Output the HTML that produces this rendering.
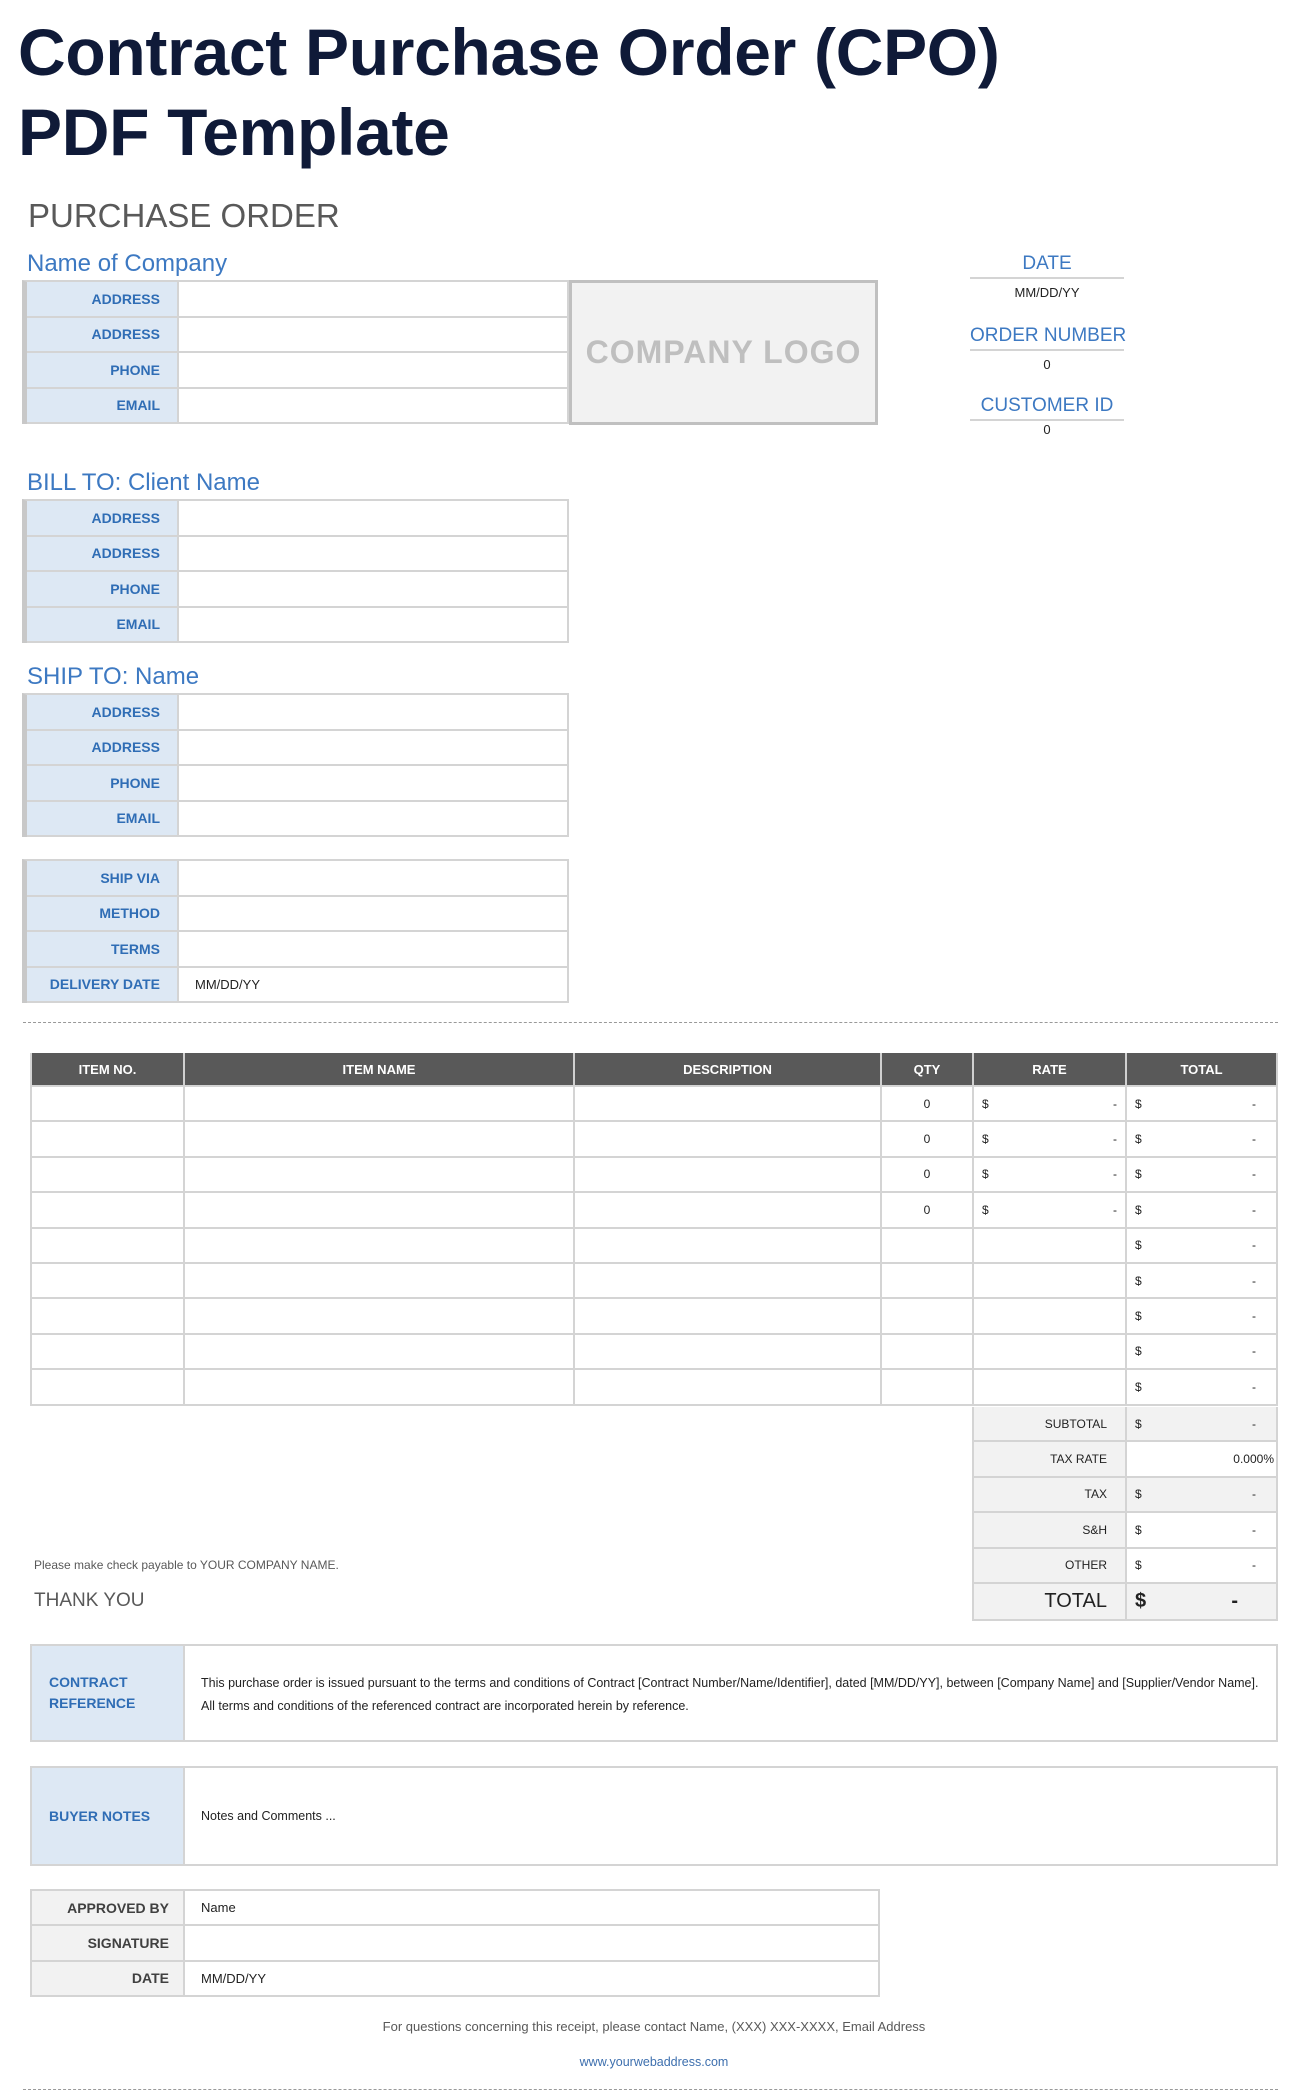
<!DOCTYPE html>
<html><head><meta charset="utf-8"><style>
*{margin:0;padding:0;box-sizing:border-box}
body{width:1300px;height:2099px;background:#fff;font-family:"Liberation Sans",sans-serif;position:relative;overflow:hidden}
.a{position:absolute}
h1{position:absolute;left:18px;font-size:66px;font-weight:bold;color:#0f1a38;letter-spacing:-0.3px;line-height:80px;white-space:nowrap}
.kv{position:absolute;left:22px;width:547px;border:2px solid #d4d4d4;border-left:5px solid #c8c8c8;border-bottom:none}
.kv .r{display:flex;height:35.5px;border-bottom:2px solid #d4d4d4}
.kv .l{width:152px;flex:none;background:#dde8f4;color:#2f6db5;font-weight:bold;font-size:14px;text-align:right;padding-right:17px;border-right:2px solid #d4d4d4;display:flex;align-items:center;justify-content:flex-end}
.kv .v{font-size:13px;padding-left:16px;color:#222;display:flex;align-items:center}
.blue{color:#3d79c2}
.grid{position:absolute;border-left:2px solid #d4d4d4}
.grid .r{display:flex;height:35.4px;border-bottom:2px solid #d4d4d4}
.grid .c{flex:none;border-right:2px solid #d4d4d4;font-size:12px;color:#222;padding:0 8px;display:flex;align-items:center}
.hd .c{background:#595959;color:#fff;font-weight:bold;font-size:13px;justify-content:center;border-right:2px solid #d0d0d0}
.g{background:#f2f2f2}
.sp{justify-content:space-between}
.sp span:last-child{margin-right:12px}
.box{position:absolute;left:30px;width:1248px;border:2px solid #d4d4d4;display:flex}
.box .lb{width:153px;flex:none;background:#dde8f4;color:#2f6db5;font-weight:bold;font-size:14px;padding-left:17px;display:flex;align-items:center;border-right:2px solid #d4d4d4;line-height:21px}
.box .tx{font-size:12.5px;color:#222;padding:26px 16px 0 16px;line-height:23px}
.dash{position:absolute;left:23px;width:1255px;border-top:1px dashed #999}
.rc{position:absolute;left:960px;width:174px;text-align:center}
.rc .h{font-size:19px;color:#3d79c2;border-bottom:2px solid #d4d4d4;padding-bottom:2px;white-space:nowrap;margin:0 10px}
.rc .v{font-size:13px;color:#222;margin-top:6px}
</style></head><body>
<h1 style="top:12px">Contract Purchase Order (CPO)</h1>
<h1 style="top:92px">PDF Template</h1>
<div class="a" style="left:28px;top:197px;font-size:33px;color:#595959">PURCHASE ORDER</div>
<div class="a blue" style="left:27px;top:250px;font-size:24px">Name of Company</div>
<div class="kv" style="top:280px"><div class="r"><div class="l">ADDRESS</div><div class="v"></div></div><div class="r"><div class="l">ADDRESS</div><div class="v"></div></div><div class="r"><div class="l">PHONE</div><div class="v"></div></div><div class="r"><div class="l">EMAIL</div><div class="v"></div></div></div>
<div class="a" style="left:569px;top:280px;width:309px;height:145px;background:#f2f2f2;border:3px solid #c0c0c0;display:flex;align-items:center;justify-content:center;font-size:32px;font-weight:bold;color:#bfbfbf;letter-spacing:1px">COMPANY LOGO</div>
<div class="rc" style="top:253px"><div class="h">DATE</div><div class="v">MM/DD/YY</div></div>
<div class="rc" style="top:325px"><div class="h">ORDER NUMBER</div><div class="v">0</div></div>
<div class="rc" style="top:395px"><div class="h">CUSTOMER ID</div><div class="v" style="margin-top:1px">0</div></div>
<div class="a blue" style="left:27px;top:469px;font-size:24px">BILL TO: Client Name</div>
<div class="kv" style="top:499px"><div class="r"><div class="l">ADDRESS</div><div class="v"></div></div><div class="r"><div class="l">ADDRESS</div><div class="v"></div></div><div class="r"><div class="l">PHONE</div><div class="v"></div></div><div class="r"><div class="l">EMAIL</div><div class="v"></div></div></div>
<div class="a blue" style="left:27px;top:663px;font-size:24px">SHIP TO: Name</div>
<div class="kv" style="top:693px"><div class="r"><div class="l">ADDRESS</div><div class="v"></div></div><div class="r"><div class="l">ADDRESS</div><div class="v"></div></div><div class="r"><div class="l">PHONE</div><div class="v"></div></div><div class="r"><div class="l">EMAIL</div><div class="v"></div></div></div>
<div class="kv" style="top:859px"><div class="r"><div class="l">SHIP VIA</div><div class="v"></div></div><div class="r"><div class="l">METHOD</div><div class="v"></div></div><div class="r"><div class="l">TERMS</div><div class="v"></div></div><div class="r"><div class="l">DELIVERY DATE</div><div class="v">MM/DD/YY</div></div></div>
<div class="dash" style="top:1022px"></div>

<div class="grid" style="left:30px;top:1053px;width:1248px">
<div class="r hd" style="height:34px"><div class="c" style="width:153px">ITEM NO.</div><div class="c" style="width:390px">ITEM NAME</div><div class="c" style="width:307px">DESCRIPTION</div><div class="c" style="width:92px">QTY</div><div class="c" style="width:153px">RATE</div><div class="c" style="width:151px">TOTAL</div></div>
<div class="r"><div class="c" style="width:153px"></div><div class="c" style="width:390px"></div><div class="c" style="width:307px"></div><div class="c" style="width:92px;justify-content:center">0</div><div class="c sp" style="width:153px"><span>$</span><span style="margin-right:0!important">-</span></div><div class="c sp" style="width:151px"><span>$</span><span>-</span></div></div>
<div class="r"><div class="c" style="width:153px"></div><div class="c" style="width:390px"></div><div class="c" style="width:307px"></div><div class="c" style="width:92px;justify-content:center">0</div><div class="c sp" style="width:153px"><span>$</span><span style="margin-right:0!important">-</span></div><div class="c sp" style="width:151px"><span>$</span><span>-</span></div></div>
<div class="r"><div class="c" style="width:153px"></div><div class="c" style="width:390px"></div><div class="c" style="width:307px"></div><div class="c" style="width:92px;justify-content:center">0</div><div class="c sp" style="width:153px"><span>$</span><span style="margin-right:0!important">-</span></div><div class="c sp" style="width:151px"><span>$</span><span>-</span></div></div>
<div class="r"><div class="c" style="width:153px"></div><div class="c" style="width:390px"></div><div class="c" style="width:307px"></div><div class="c" style="width:92px;justify-content:center">0</div><div class="c sp" style="width:153px"><span>$</span><span style="margin-right:0!important">-</span></div><div class="c sp" style="width:151px"><span>$</span><span>-</span></div></div>
<div class="r"><div class="c" style="width:153px"></div><div class="c" style="width:390px"></div><div class="c" style="width:307px"></div><div class="c" style="width:92px"></div><div class="c" style="width:153px"></div><div class="c sp" style="width:151px"><span>$</span><span>-</span></div></div>
<div class="r"><div class="c" style="width:153px"></div><div class="c" style="width:390px"></div><div class="c" style="width:307px"></div><div class="c" style="width:92px"></div><div class="c" style="width:153px"></div><div class="c sp" style="width:151px"><span>$</span><span>-</span></div></div>
<div class="r"><div class="c" style="width:153px"></div><div class="c" style="width:390px"></div><div class="c" style="width:307px"></div><div class="c" style="width:92px"></div><div class="c" style="width:153px"></div><div class="c sp" style="width:151px"><span>$</span><span>-</span></div></div>
<div class="r"><div class="c" style="width:153px"></div><div class="c" style="width:390px"></div><div class="c" style="width:307px"></div><div class="c" style="width:92px"></div><div class="c" style="width:153px"></div><div class="c sp" style="width:151px"><span>$</span><span>-</span></div></div>
<div class="r"><div class="c" style="width:153px"></div><div class="c" style="width:390px"></div><div class="c" style="width:307px"></div><div class="c" style="width:92px"></div><div class="c" style="width:153px"></div><div class="c sp" style="width:151px"><span>$</span><span>-</span></div></div>
</div>

<div class="grid" style="left:972px;top:1407px;width:306px">
<div class="r"><div class="c g" style="width:153px;justify-content:flex-end;padding-right:18px">SUBTOTAL</div><div class="c g sp" style="width:151px"><span>$</span><span>-</span></div></div>
<div class="r"><div class="c g" style="width:153px;justify-content:flex-end;padding-right:18px">TAX RATE</div><div class="c" style="width:151px;justify-content:flex-end;padding-right:2px">0.000%</div></div>
<div class="r"><div class="c g" style="width:153px;justify-content:flex-end;padding-right:18px">TAX</div><div class="c g sp" style="width:151px"><span>$</span><span>-</span></div></div>
<div class="r"><div class="c g" style="width:153px;justify-content:flex-end;padding-right:18px">S&amp;H</div><div class="c sp" style="width:151px"><span>$</span><span>-</span></div></div>
<div class="r"><div class="c g" style="width:153px;justify-content:flex-end;padding-right:18px">OTHER</div><div class="c sp" style="width:151px"><span>$</span><span>-</span></div></div>
<div class="r" style="height:37px"><div class="c g" style="width:153px;justify-content:flex-end;padding-right:18px;font-size:20px">TOTAL</div><div class="c g sp" style="width:151px;font-size:20px;font-weight:bold"><span>$</span><span style="margin-right:30px">-</span></div></div>
</div>

<div class="a" style="left:34px;top:1558px;font-size:12px;color:#595959">Please make check payable to YOUR COMPANY NAME.</div>
<div class="a" style="left:34px;top:1590px;font-size:19px;color:#595959">THANK YOU</div>
<div class="box" style="top:1644px;height:98px"><div class="lb">CONTRACT<br>REFERENCE</div><div class="tx">This purchase order is issued pursuant to the terms and conditions of Contract [Contract Number/Name/Identifier], dated [MM/DD/YY], between [Company Name] and [Supplier/Vendor Name]. All terms and conditions of the referenced contract are incorporated herein by reference.</div></div>
<div class="box" style="top:1766px;height:100px"><div class="lb">BUYER NOTES</div><div class="tx" style="padding-top:0;display:flex;align-items:center">Notes and Comments ...</div></div>

<div class="grid" style="left:30px;top:1889px;width:850px;border-top:2px solid #d4d4d4">
<div class="r"><div class="c g" style="width:153px;justify-content:flex-end;padding-right:14px;font-weight:bold;color:#404040;font-size:14px">APPROVED BY</div><div class="c" style="width:695px;padding-left:16px;font-size:13px">Name</div></div>
<div class="r"><div class="c g" style="width:153px;justify-content:flex-end;padding-right:14px;font-weight:bold;color:#404040;font-size:14px">SIGNATURE</div><div class="c" style="width:695px"></div></div>
<div class="r"><div class="c g" style="width:153px;justify-content:flex-end;padding-right:14px;font-weight:bold;color:#404040;font-size:14px">DATE</div><div class="c" style="width:695px;padding-left:16px;font-size:13px">MM/DD/YY</div></div>
</div>

<div class="a" style="left:0;width:1308px;top:2019px;text-align:center;font-size:13px;color:#595959">For questions concerning this receipt, please contact Name, (XXX) XXX-XXXX, Email Address</div>
<div class="a" style="left:0;width:1308px;top:2055px;text-align:center;font-size:12.5px;color:#3d6fae">www.yourwebaddress.com</div>
<div class="dash" style="top:2089px"></div>
</body></html>
